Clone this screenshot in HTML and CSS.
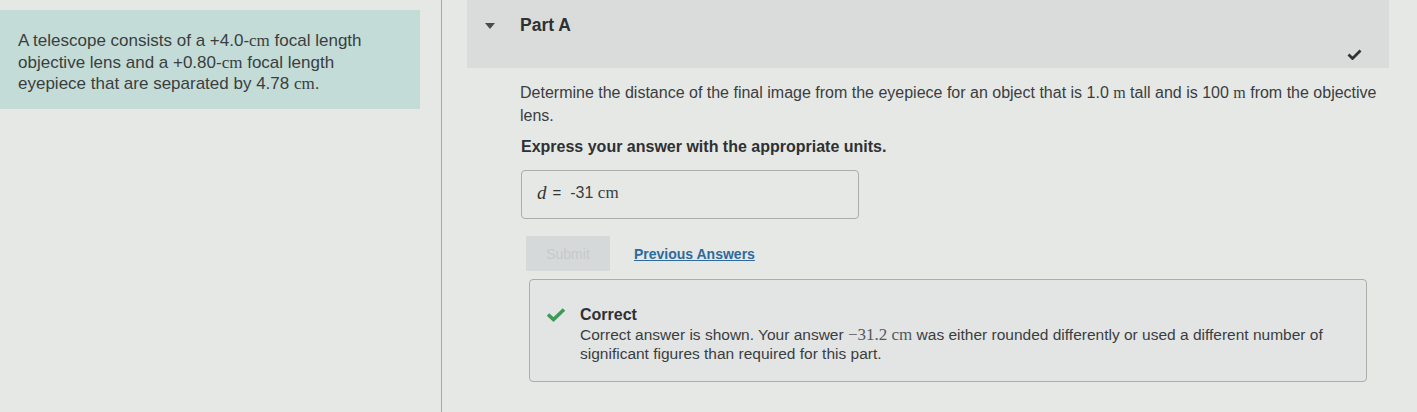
FILE: index.html
```html
<!DOCTYPE html>
<html>
<head>
<meta charset="utf-8">
<link rel="stylesheet" href="styles.css">
</head>
<body>
<div class="page">
  <aside class="left">
    <div class="intro">
      A telescope consists of a +4.0-<span class="math">cm</span> focal length objective lens and a +0.80-<span class="math">cm</span> focal length eyepiece that are separated by 4.78 <span class="math">cm</span>.
    </div>
  </aside>
  <main class="right">
    <header class="part-head">
      <div class="part-title">
        <svg class="caret" width="10" height="6" viewBox="0 0 10 6"><path d="M0 0 H10 L5 6 Z" fill="#4a4d4f"/></svg>
        <span>Part A</span>
      </div>
      <svg class="done" width="15" height="11" viewBox="0 0 15 11"><path d="M1.5 5.5 L5.5 9.5 L13.5 1.5" fill="none" stroke="#2f3437" stroke-width="2.8"/></svg>
    </header>
    <section class="body">
      <p class="question">Determine the distance of the final image from the eyepiece for an object that is 1.0 <span class="math">m</span> tall and is 100 <span class="math">m</span> from the objective lens.</p>
      <p class="instr">Express your answer with the appropriate units.</p>
      <div class="answer">
        <span class="var">d</span><span class="eq">=</span><span class="val">-31 <span class="math">cm</span></span>
      </div>
      <div class="actions">
        <button class="submit">Submit</button>
        <a class="prev" href="#">Previous Answers</a>
      </div>
      <div class="feedback">
        <svg class="ok" width="20" height="15" viewBox="0 0 20 15"><path d="M2 7.5 L7.5 12.5 L18 2.5" fill="none" stroke="#3f9a55" stroke-width="3.6"/></svg>
        <div class="fb-text">
          <div class="fb-title">Correct</div>
          <div class="fb-msg">Correct answer is shown. Your answer <span class="math big">&minus;31.2 cm</span> was either rounded differently or used a different number of significant figures than required for this part.</div>
        </div>
      </div>
    </section>
  </main>
</div>
</body>
</html>
```

FILE: styles.css
```css
* { box-sizing: border-box; }
html, body { margin: 0; padding: 0; }
body {
  background: #e6e8e6;
  font-family: "Liberation Sans", Arial, sans-serif;
  color: #333637;
  width: 1417px;
  height: 412px;
  overflow: hidden;
}
.page {
  display: flex;
  height: 412px;
}
.left {
  width: 442px;
  flex: none;
  padding-top: 10px;
  border-right: 1px solid #a4aaac;
}
.intro {
  width: 420px;
  height: 99px;
  background: #c4dcd7;
  padding: 20px 44px 0 18px;
  font-size: 17px;
  line-height: 21.5px;
  color: #3a3e40;
}
.math {
  font-family: "Liberation Serif", "Times New Roman", serif;
}
.right {
  flex: 1;
  padding-left: 25px;
}
.part-head {
  width: 922px;
  height: 68px;
  background: #dadcdb;
  position: relative;
  padding: 15px 0 0 18px;
}
.part-title {
  display: flex;
  align-items: center;
  gap: 25px;
  font-weight: bold;
  font-size: 17.5px;
  color: #2e3133;
}
.done {
  position: absolute;
  left: 880px;
  top: 49px;
}
.body {
  padding-left: 53px;
}
.question {
  margin: 13px 0 0;
  width: 872px;
  font-size: 16px;
  line-height: 23px;
  color: #3a3d3f;
}
.instr {
  margin: 9px 0 0 1px;
  font-size: 16px;
  font-weight: bold;
  line-height: 22px;
  color: #2e3133;
}
.answer {
  margin: 12px 0 0 1px;
  width: 338px;
  height: 49px;
  border: 1px solid #a9adae;
  border-radius: 4px;
  display: flex;
  align-items: center;
  padding: 0 0 4px 15px;
  font-size: 16px;
}
.var {
  font-family: "Liberation Serif", serif;
  font-style: italic;
  font-size: 19px;
}
.eq { margin: 0 9px 0 6px; font-size: 15px; }
.val { color: #3a3d3f; }
.val .math { font-size: 17px; }
.actions {
  margin: 17px 0 0 6px;
  display: flex;
  align-items: center;
  gap: 24px;
}
.submit {
  width: 84px;
  height: 35px;
  border: none;
  background: #d6d9d9;
  color: #c6caca;
  font-family: "Liberation Sans", Arial, sans-serif;
  font-size: 14px;
}
.prev {
  color: #2c6b9c;
  font-weight: bold;
  font-size: 14px;
  text-decoration: underline;
}
.feedback {
  margin: 8px 0 0 9px;
  width: 838px;
  height: 103px;
  border: 1px solid #a9adae;
  border-radius: 4px;
  background: #e3e5e4;
  display: flex;
  padding: 25px 0 0 16px;
  gap: 14px;
}
.ok { flex: none; margin-top: 2px; }
.fb-title {
  font-weight: bold;
  font-size: 16px;
  line-height: 20px;
  color: #2e3133;
}
.fb-msg {
  width: 770px;
  font-size: 15.5px;
  line-height: 19px;
  color: #3a3d3f;
}
.big { font-size: 17px; color: #55595b; }
```
